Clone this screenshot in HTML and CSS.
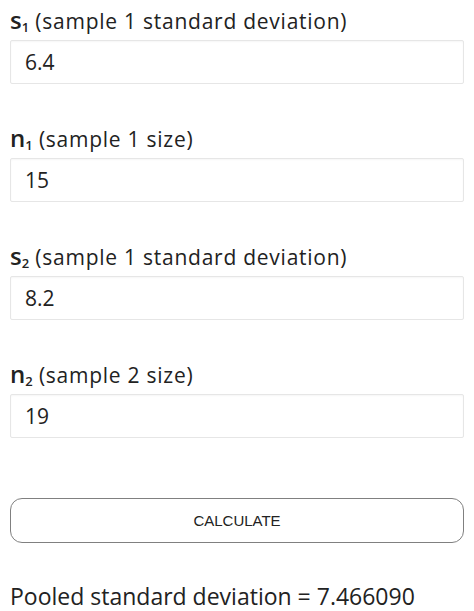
FILE: index.html
```html
<!DOCTYPE html>
<html lang="en">
<head>
    <meta charset="UTF-8">
    <meta name="viewport" content="width=device-width, initial-scale=1.0">
    <title>Pooled Standard Deviation Calculator</title>
    <link rel="stylesheet" href="styles.css">
</head>
<body>
    <div class="calculator">
        <div class="field">
            <label for="s1"><span class="var">s<sub>1</sub></span> (sample 1 standard deviation)</label>
            <input type="text" id="s1" value="6.4">
        </div>

        <div class="field">
            <label for="n1"><span class="var">n<sub>1</sub></span> (sample 1 size)</label>
            <input type="text" id="n1" value="15">
        </div>

        <div class="field">
            <label for="s2"><span class="var">s<sub>2</sub></span> (sample 1 standard deviation)</label>
            <input type="text" id="s2" value="8.2">
        </div>

        <div class="field">
            <label for="n2"><span class="var">n<sub>2</sub></span> (sample 2 size)</label>
            <input type="text" id="n2" value="19">
        </div>

        <button class="calc-btn" type="button">CALCULATE</button>

        <div class="result">Pooled standard deviation = 7.466090</div>
    </div>
</body>
</html>
```

FILE: styles.css
```css
* {
    box-sizing: border-box;
    margin: 0;
    padding: 0;
}

body {
    background-color: #fff;
    color: #222;
    font-family: 'Open Sans', Lato, sans-serif;
    padding: 0 10px;
}

.calculator {
    display: flex;
    flex-direction: column;
}

.field {
    display: flex;
    flex-direction: column;
    margin-bottom: 34px;
}

.field label {
    display: block;
    height: 40px;
    font-size: 21px;
    line-height: 40px;
    letter-spacing: 0.75px;
    color: #222;
    white-space: nowrap;
}

.var {
    font-size: 24px;
    font-weight: 600;
    letter-spacing: 0;
}

.var sub {
    font-size: 13px;
    vertical-align: -3px;
    line-height: 1;
}

.field input {
    height: 44px;
    width: 100%;
    border: 1px solid #e6e6e6;
    border-radius: 2px;
    box-shadow: inset 0 1px 2px rgba(0, 0, 0, 0.04);
    padding: 0 14px;
    font-family: 'Open Sans', Lato, sans-serif;
    font-size: 21px;
    color: #222;
    background-color: #fff;
}

.calc-btn {
    margin-top: 26px;
    height: 45px;
    width: 100%;
    border: 1px solid #808080;
    border-radius: 12px;
    background-color: #fff;
    font-family: 'Liberation Sans', Arial, sans-serif;
    font-size: 15px;
    color: #222;
}

.result {
    margin-top: 38px;
    font-size: 23px;
    line-height: 30px;
    color: #222;
    white-space: nowrap;
}
```
